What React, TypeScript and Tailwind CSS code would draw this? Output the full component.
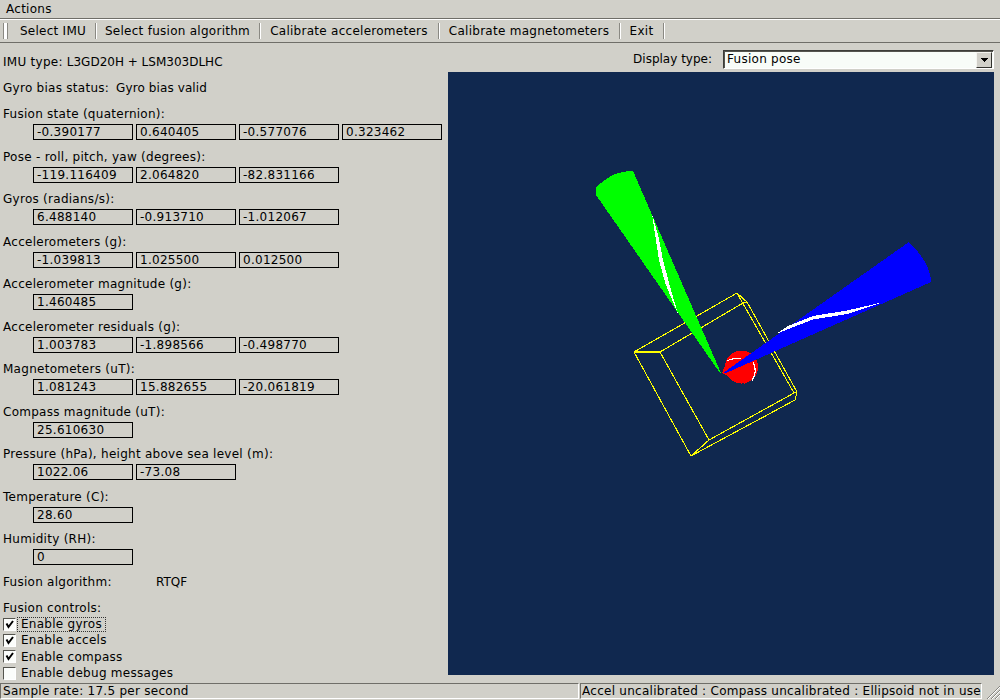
import React from "react";

const groups: { label: string; values: string[] }[] = [
  { label: "Fusion state (quaternion):", values: ["-0.390177", "0.640405", "-0.577076", "0.323462"] },
  { label: "Pose - roll, pitch, yaw (degrees):", values: ["-119.116409", "2.064820", "-82.831166"] },
  { label: "Gyros (radians/s):", values: ["6.488140", "-0.913710", "-1.012067"] },
  { label: "Accelerometers (g):", values: ["-1.039813", "1.025500", "0.012500"] },
  { label: "Accelerometer magnitude (g):", values: ["1.460485"] },
  { label: "Accelerometer residuals (g):", values: ["1.003783", "-1.898566", "-0.498770"] },
  { label: "Magnetometers (uT):", values: ["1.081243", "15.882655", "-20.061819"] },
  { label: "Compass magnitude (uT):", values: ["25.610630"] },
  { label: "Pressure (hPa), height above sea level (m):", values: ["1022.06", "-73.08"] },
  { label: "Temperature (C):", values: ["28.60"] },
  { label: "Humidity (RH):", values: ["0"] },
];

const toolbar: { label: string; w: string }[] = [
  { label: "Select IMU", w: "w-[85px]" },
  { label: "Select fusion algorithm", w: "w-[164px]" },
  { label: "Calibrate accelerometers", w: "w-[179px]" },
  { label: "Calibrate magnetometers", w: "w-[181px]" },
  { label: "Exit", w: "w-[44px]" },
];

function Check({ label, checked, focus }: { label: string; checked?: boolean; focus?: boolean }) {
  return (
    <div className="flex h-[16.33px] items-center">
      <div className="relative h-[13px] w-[13px] border border-t-[#55554f] border-l-[#55554f] border-r-white border-b-white bg-[#fbfdfb]">
        {checked && (
          <svg width="11" height="11" viewBox="0 0 11 11" className="block">
            <path d="M2.5 4.5 L4.5 8 L9 2" fill="none" stroke="#000" strokeWidth="2" />
          </svg>
        )}
      </div>
      <div className={"ml-[1px] flex h-[15px] items-center px-[3px] border border-dotted " + (focus ? "border-[#333]" : "border-transparent")}>
        {label}
      </div>
    </div>
  );
}

function Scene() {
  const y = "#ffff00";
  const lines: [number, number, number, number][] = [
    [634, 352, 737, 293],
    [737, 293, 747, 302],
    [737, 293, 794, 393],
    [747, 302, 797, 392],
    [797, 392, 795, 400],
    [794, 393, 797, 392],
    [634, 352, 691, 456],
    [691, 456, 795, 400],
    [691, 456, 709, 440],
    [709, 440, 794, 393],
    [634, 352, 660, 352],
    [660, 352, 743, 303],
    [743, 303, 747, 302],
    [660, 352, 709, 440],
  ];
  return (
    <svg width="546" height="603" viewBox="448 72 546 603" className="block" shapeRendering="crispEdges">
      {lines.map(([a, b, c, d], i) => (
        <line key={i} x1={a} y1={b} x2={c} y2={d} stroke={y} strokeWidth="1.1" />
      ))}
      <circle cx="741.5" cy="367" r="16.5" fill="#ff0000" />
      <path d="M722 373 L729 356 L745 384 Z" fill="#ff0000" />
      <path d="M727 361 Q733 358 741 358" fill="none" stroke="#fff" strokeWidth="1" />
      <path d="M753 362 Q758 371 752 381" fill="none" stroke="#fff" strokeWidth="1.2" />
      <path d="M720 373 L596 195 L596 188 Q603 180 613 175 Q623 171 633 171 L721 373 Z" fill="#00ff00" />
      <path d="M652 214 L655.5 237 L659 260 L665.5 284 L678 314 L669 283 L663 260 L658.5 237 Z" fill="#fff" />
      <path d="M723 373 L909 242 Q921 253 928 268 Q931 275 931 282 L726 373 Z" fill="#0000ff" />
      <path d="M776 334 L787 326.5 L813 316 L847 310.5 L884 302 L847 314 L813 319.5 L787 329.5 Z" fill="#fff" />
    </svg>
  );
}

export default function App() {
  return (
    <div className="flex h-[700px] w-[1000px] flex-col overflow-hidden bg-[#d1d0c9] font-['DejaVu_Sans',sans-serif] text-[12px] leading-[16px] tracking-[0.27px] text-black">
      <div className="flex h-[18px] shrink-0 items-center pl-[6px]">Actions</div>
      <div className="flex h-[25px] shrink-0 items-center border-t border-t-[#6f6e68] border-b border-b-[#6f6e68] shadow-[inset_0_1px_0_#ffffff]">
        <div className="ml-[3px] mr-[3px] h-[16px] w-[5px] border-x border-x-[#8a8983] bg-white" />
        {toolbar.map((t) => (
          <div key={t.label} className={"flex h-[16px] items-center justify-center border-r border-r-[#8a8983] shadow-[1px_0_0_#ffffff] " + t.w}>
            {t.label}
          </div>
        ))}
      </div>
      <div className="flex min-h-0 flex-1">
        <div className="flex w-[448px] shrink-0 flex-col pl-[3px] pt-[11px]">
          <div className="flex h-[16px] gap-[4px]">
            <span>IMU type:</span>
            <span className="tracking-normal">L3GD20H + LSM303DLHC</span>
          </div>
          <div className="mt-[10px] flex h-[16px] gap-[7px]">
            <span>Gyro bias status:</span>
            <span className="tracking-[0.1px]">Gyro bias valid</span>
          </div>
          <div className="mt-[10px] flex flex-col gap-[8.5px]">
            {groups.map((g) => (
              <div key={g.label} className="flex flex-col gap-[2px]">
                <div className="h-[16px] whitespace-nowrap">{g.label}</div>
                <div className="flex gap-[3px] pl-[30px]">
                  {g.values.map((v, i) => (
                    <div key={i} className="h-[16px] w-[100px] border border-black pl-[3px] leading-[14px]">
                      {v}
                    </div>
                  ))}
                </div>
              </div>
            ))}
          </div>
          <div className="mt-[9px] flex h-[16px]">
            <span className="w-[153px]">Fusion algorithm:</span>
            <span className="tracking-normal">RTQF</span>
          </div>
          <div className="mt-[10px] h-[16px]">Fusion controls:</div>
          <Check label="Enable gyros" checked focus />
          <Check label="Enable accels" checked />
          <Check label="Enable compass" checked />
          <Check label="Enable debug messages" />
        </div>
        <div className="flex flex-1 flex-col pb-[8px] pr-[6px]">
          <div className="flex h-[29px] shrink-0 items-start justify-end pt-[7px]">
            <span className="mr-[11px] mt-[1px] tracking-normal">Display type:</span>
            <div className="flex h-[19px] w-[271px] items-center justify-between border border-t-[#3c3c38] border-l-[#3c3c38] border-r-white border-b-white bg-[#f8fcf8] pl-[3px] shadow-[inset_1px_1px_0_#55554f]">
              <span className="-mt-px">Fusion pose</span>
              <div className="mr-px flex h-[16px] w-[16px] items-center justify-center border border-t-[#f4f4f0] border-l-[#f4f4f0] border-r-[#33332f] border-b-[#33332f] bg-[#d1d0c9]">
                <svg width="7" height="4" viewBox="0 0 7 4" className="block" shapeRendering="crispEdges">
                  <path d="M0 0 H7 L3.5 4 Z" fill="#000" />
                </svg>
              </div>
            </div>
          </div>
          <div className="min-h-0 flex-1 bg-[#10284f]">
            <Scene />
          </div>
        </div>
      </div>
      <div className="flex h-[17px] shrink-0 items-start gap-[1px]">
        <div className="h-[16px] w-[579px] border border-t-[#6f6e68] border-l-[#6f6e68] border-r-white border-b-white pl-[2px] leading-[14px]">
          Sample rate: 17.5 per second
        </div>
        <div className="h-[16px] w-[402px] border border-t-[#6f6e68] border-l-[#6f6e68] border-r-white border-b-white pl-[1px] leading-[14px] whitespace-nowrap">
          Accel uncalibrated : Compass uncalibrated : Ellipsoid not in use
        </div>
        <svg width="16" height="16" viewBox="0 0 16 16" className="ml-[1px] block" shapeRendering="crispEdges">
          <path d="M3 16 L16 3 M7 16 L16 7 M11 16 L16 11" stroke="#85847e" strokeWidth="1" />
          <path d="M4 16 L16 4 M8 16 L16 8 M12 16 L16 12" stroke="#ffffff" strokeWidth="1" />
        </svg>
      </div>
    </div>
  );
}
